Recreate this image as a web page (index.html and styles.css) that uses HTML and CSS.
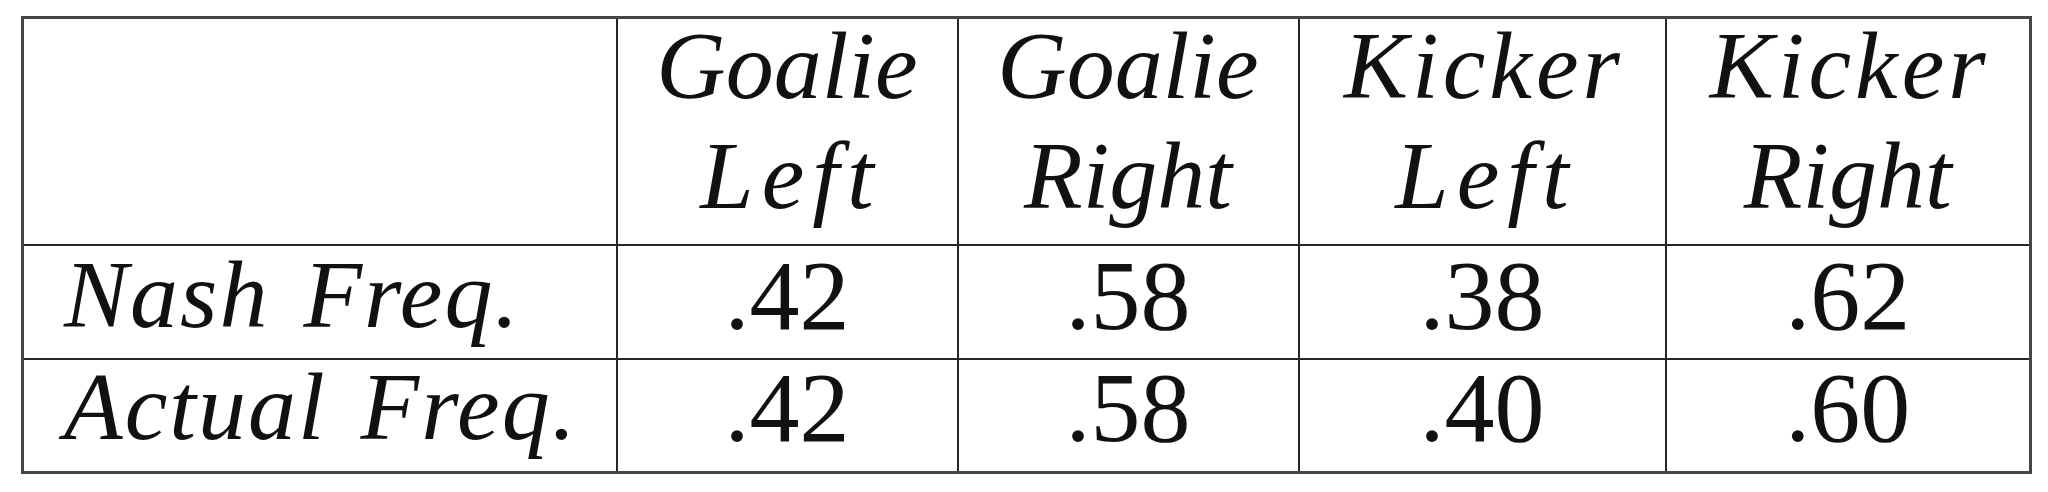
FILE: index.html
```html
<!DOCTYPE html>
<html lang="en">
<head>
<meta charset="utf-8">
<title>Nash vs Actual Frequencies</title>
<link rel="stylesheet" href="styles.css">
</head>
<body>
<table class="freq">
  <colgroup>
    <col class="c-label">
    <col class="c-g">
    <col class="c-g">
    <col class="c-k">
    <col class="c-k2">
  </colgroup>
  <tr class="head">
    <td class="blank"></td>
    <td class="hd"><span class="l1">Goalie</span><span class="l2 wide">Left</span></td>
    <td class="hd"><span class="l1">Goalie</span><span class="l2">Right</span></td>
    <td class="hd"><span class="l1 kick">Kicker</span><span class="l2 wide">Left</span></td>
    <td class="hd"><span class="l1 kick">Kicker</span><span class="l2">Right</span></td>
  </tr>
  <tr class="row">
    <td class="lab">Nash Freq.</td>
    <td class="num">.42</td>
    <td class="num">.58</td>
    <td class="num">.38</td>
    <td class="num">.62</td>
  </tr>
  <tr class="row row2">
    <td class="lab">Actual Freq.</td>
    <td class="num">.42</td>
    <td class="num">.58</td>
    <td class="num">.40</td>
    <td class="num">.60</td>
  </tr>
</table>
</body>
</html>
```

FILE: styles.css
```css
html, body {
  margin: 0;
  padding: 0;
  background: #ffffff;
}

body {
  padding: 16px 0 0 21px;
}

.freq {
  border-collapse: collapse;
  table-layout: fixed;
  width: 2008px;
  border: 3px solid #444444;
  font-family: "Liberation Serif", "Times New Roman", serif;
  font-size: 96px;
  color: #111111;
}

.c-label { width: 594px; }
.c-g { width: 341px; }
.c-k { width: 367px; }
.c-k2 { width: 365px; }

.freq td {
  border: 2px solid #262626;
  padding: 0;
  vertical-align: top;
  text-align: center;
  white-space: nowrap;
}

.head { height: 227px; }
.row { height: 114px; }

.hd {
  font-style: italic;
}

.hd .l1,
.hd .l2 {
  display: block;
}

.hd .l1 { line-height: 94px; }
.hd .l2 { line-height: 126px; }

.hd .kick {
  letter-spacing: 4px;
  text-indent: 4px;
}

.hd .wide {
  letter-spacing: 8px;
  text-indent: 8px;
}

.lab {
  text-align: left !important;
  font-style: italic;
  padding-left: 40px !important;
  line-height: 98px;
  letter-spacing: 2px;
  word-spacing: 8px;
}

.num {
  font-size: 100px;
  line-height: 100px;
}

.row2 .lab {
  line-height: 94px;
}

.row2 .num {
  line-height: 96px;
}
```
